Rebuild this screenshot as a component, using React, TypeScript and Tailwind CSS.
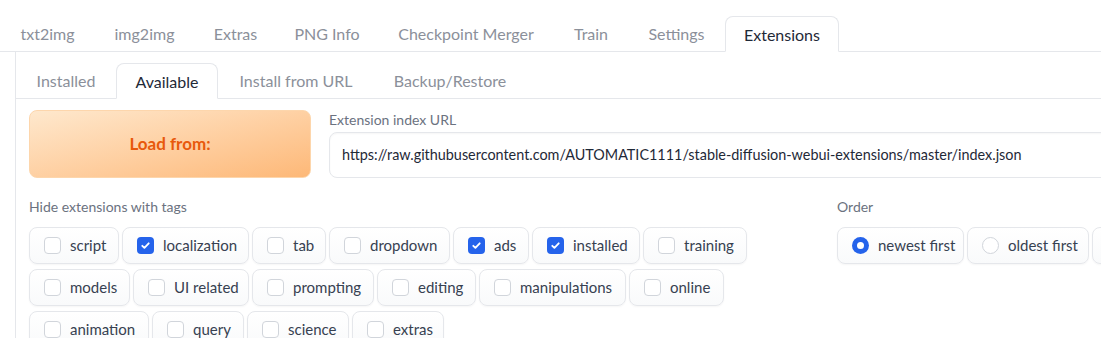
import React from "react";

const topTabs = [
  { label: "txt2img", w: "w-[93px]" },
  { label: "img2img", w: "w-[101px]" },
  { label: "Extras", w: "w-[81px]" },
  { label: "PNG Info", w: "w-[102px]" },
  { label: "Checkpoint Merger", w: "w-[176px]" },
  { label: "Train", w: "w-[74px]" },
  { label: "Settings", w: "w-[97px]" },
  { label: "Extensions", w: "w-[114px]", active: true },
];

const subTabs = [
  { label: "Installed", w: "w-[100px]" },
  { label: "Available", w: "w-[102px]", active: true },
  { label: "Install from URL", w: "w-[156px]" },
  { label: "Backup/Restore", w: "w-[152px]" },
];

const tagRows = [
  [
    { label: "script", w: "w-[90px]" },
    { label: "localization", w: "w-[127px]", checked: true },
    { label: "tab", w: "w-[74px]" },
    { label: "dropdown", w: "w-[121px]" },
    { label: "ads", w: "w-[76px]", checked: true },
    { label: "installed", w: "w-[108px]", checked: true },
    { label: "training", w: "w-[104px]" },
  ],
  [
    { label: "models", w: "w-[101px]" },
    { label: "UI related", w: "w-[116px]" },
    { label: "prompting", w: "w-[122px]" },
    { label: "editing", w: "w-[99px]" },
    { label: "manipulations", w: "w-[147px]" },
    { label: "online", w: "w-[95px]" },
  ],
  [
    { label: "animation", w: "w-[120px]" },
    { label: "query", w: "w-[92px]" },
    { label: "science", w: "w-[102px]" },
    { label: "extras", w: "w-[92px]" },
  ],
];

const orders = [
  { label: "newest first", w: "w-[127px]", checked: true },
  { label: "oldest first", w: "w-[122px]" },
  { label: "a-z", w: "w-[80px]" },
];

const Check = ({ checked }: { checked?: boolean }) =>
  checked ? (
    <span className="flex h-[17px] w-[17px] shrink-0 items-center justify-center rounded-[4px] bg-[#2563eb]">
      <svg width="11" height="11" viewBox="0 0 12 12" fill="none">
        <path d="M2.5 6.3l2.3 2.3 4.7-5" stroke="white" strokeWidth="2" strokeLinecap="round" strokeLinejoin="round" />
      </svg>
    </span>
  ) : (
    <span className="h-[17px] w-[17px] shrink-0 rounded-[4px] border border-[#d1d5db] bg-white" />
  );

const Radio = ({ checked }: { checked?: boolean }) =>
  checked ? (
    <span className="flex h-[17px] w-[17px] shrink-0 items-center justify-center rounded-full bg-[#2563eb]">
      <span className="h-[7px] w-[7px] rounded-full bg-white" />
    </span>
  ) : (
    <span className="h-[17px] w-[17px] shrink-0 rounded-full border border-[#d1d5db] bg-white" />
  );

const Pill = ({ w, children, label }: { w: string; children: React.ReactNode; label: string }) => (
  <label
    className={`${w} flex h-[37px] shrink-0 items-center gap-[9px] rounded-lg border border-[#e5e7eb] bg-gradient-to-b from-white to-[#f9fafb] pl-[14px] text-[15px] text-[#374151] shadow-[0_1px_2px_rgba(0,0,0,0.04)]`}
  >
    {children}
    <span className="whitespace-nowrap">{label}</span>
  </label>
);

export default function App() {
  return (
    <div
      className="h-[338px] w-[1101px] overflow-hidden bg-white"
      style={{ fontFamily: "Lato, 'Open Sans', sans-serif" }}
    >
      <div className="w-[1300px]">
        <div className="flex border-b border-[#e5e7eb] pt-[16px] pl-[1px]">
          {topTabs.map((t) => (
            <div
              key={t.label}
              className={`${t.w} -mb-px h-[36px] whitespace-nowrap text-center text-[16px] leading-[35px] ${
                t.active
                  ? "rounded-t-lg border border-b-white border-[#e5e7eb] bg-white text-[#1f2937]"
                  : "text-[#8b909a]"
              }`}
            >
              {t.label}
            </div>
          ))}
        </div>

        <div className="ml-[15px] border-l border-[#e5e7eb]">
          <div className="flex border-b border-[#e5e7eb] pt-[11px]">
            {subTabs.map((t) => (
              <div
                key={t.label}
                className={`${t.w} -mb-px h-[36px] whitespace-nowrap text-center text-[16px] leading-[35px] ${
                  t.active
                    ? "rounded-t-lg border border-b-white border-[#e5e7eb] bg-white text-[#1f2937]"
                    : "text-[#8b909a]"
                }`}
              >
                {t.label}
              </div>
            ))}
          </div>

          <div className="pl-[13px] pt-[11px]">
            <div className="flex gap-[18px]">
              <button className="flex h-[68px] w-[282px] shrink-0 items-center justify-center rounded-lg border border-[#fdd6ac] bg-gradient-to-br from-[#fee8cd] to-[#fdb877] text-[17px] font-bold text-[#e8590c]">
                Load from:
              </button>
              <div className="flex flex-1 flex-col">
                <span className="h-[22px] text-[14px] leading-[20px] text-[#6b7280]">Extension index URL</span>
                <div className="flex h-[46px] items-center rounded-lg border border-[#e5e7eb] pl-[12px] text-[14.4px] text-[#1f2937] shadow-[inset_0_1px_2px_rgba(0,0,0,0.04)]">
                  https://raw.githubusercontent.com/AUTOMATIC1111/stable-diffusion-webui-extensions/master/index.json
                </div>
              </div>
            </div>

            <div className="mt-[19px] flex gap-[18px]">
              <div className="w-[790px] shrink-0">
                <div className="mb-[10px] text-[14px] leading-[20px] text-[#6b7280]">Hide extensions with tags</div>
                <div className="flex flex-col gap-[5px]">
                  {tagRows.map((row, i) => (
                    <div key={i} className="flex gap-[3px]">
                      {row.map((t) => (
                        <Pill key={t.label} w={t.w} label={t.label}>
                          <Check checked={t.checked} />
                        </Pill>
                      ))}
                    </div>
                  ))}
                </div>
              </div>
              <div>
                <div className="mb-[10px] text-[14px] leading-[20px] text-[#6b7280]">Order</div>
                <div className="flex gap-[3px]">
                  {orders.map((o) => (
                    <Pill key={o.label} w={o.w} label={o.label}>
                      <Radio checked={o.checked} />
                    </Pill>
                  ))}
                </div>
              </div>
            </div>
          </div>
        </div>
      </div>
    </div>
  );
}
